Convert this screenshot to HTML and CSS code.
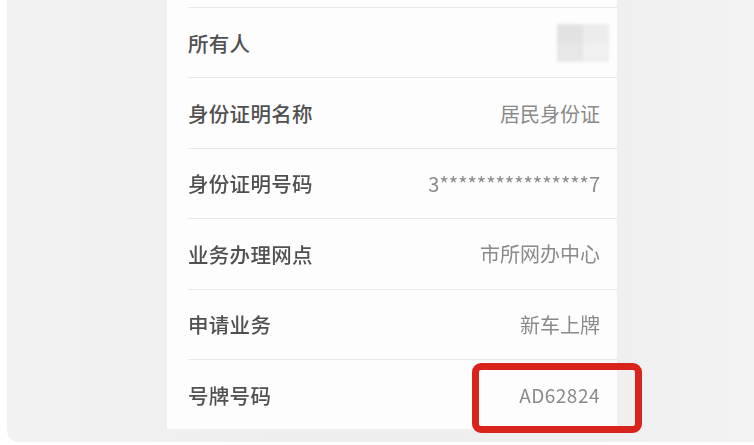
FILE: index.html
```html
<!DOCTYPE html>
<html lang="zh-CN">
<head>
<meta charset="utf-8">
<title>业务信息</title>
<link rel="stylesheet" href="styles.css">
</head>
<body>
<div class="frame">
  <div class="screen">
    <div class="card">
      <div class="row row-top"></div>
      <div class="row">
        <span class="label">所有人</span>
        <span class="mosaic"><i class="m1"></i><i class="m2"></i><i class="m3"></i><i class="m4"></i></span>
      </div>
      <div class="row">
        <span class="label">身份证明名称</span>
        <span class="value">居民身份证</span>
      </div>
      <div class="row">
        <span class="label">身份证明号码</span>
        <span class="value">3****************7</span>
      </div>
      <div class="row">
        <span class="label">业务办理网点</span>
        <span class="value">市所网办中心</span>
      </div>
      <div class="row">
        <span class="label">申请业务</span>
        <span class="value">新车上牌</span>
      </div>
      <div class="row row-last">
        <span class="label">号牌号码</span>
        <span class="value plate">AD62824</span>
        <span class="highlight"></span>
      </div>
    </div>
  </div>
</div>
</body>
</html>
```
FILE: styles.css
```css
html, body {
  margin: 0;
  padding: 0;
  width: 754px;
  height: 445px;
  overflow: hidden;
  background: #ffffff;
}

.frame {
  width: 754px;
  height: 445px;
  padding-left: 7px;
  padding-bottom: 3px;
  box-sizing: border-box;
}

.screen {
  height: 100%;
  background: linear-gradient(90deg, #f2f2f2 0%, #eeeeee 40%, #efefef 80%, #f3f3f3 100%);
  border-bottom-left-radius: 12px;
  overflow: hidden;
  padding-left: 160px;
}

.card {
  width: 450px;
  background: #fdfdfd;
  font-family: "Noto Sans CJK SC", "Noto Sans", sans-serif;
  filter: blur(0.7px);
}

.row {
  position: relative;
  height: 70.4px;
  box-sizing: border-box;
  margin-left: 21px;
  border-top: 1px solid #e9e9e9;
  display: flex;
  align-items: center;
  justify-content: space-between;
  padding-right: 17px;
}

.row-top {
  height: 7px;
  border-top: none;
}

.label {
  font-size: 20.5px;
  font-weight: 500;
  color: #505050;
  letter-spacing: 0.3px;
}

.value {
  font-size: 20px;
  color: #8a8a8a;
}

.plate {
  font-size: 19px;
  letter-spacing: 0.5px;
}

.mosaic {
  display: grid;
  grid-template-columns: 26px 26px;
  grid-template-rows: 19px 19px;
  margin-right: -9px;
  filter: blur(1.5px);
}

.mosaic i { display: block; }
.mosaic .m1 { background: #e2e2e2; }
.mosaic .m2 { background: #ececec; }
.mosaic .m3 { background: #e7e7e7; }
.mosaic .m4 { background: #f0f0f0; }

.highlight {
  position: absolute;
  top: 3px;
  right: -25px;
  width: 170px;
  height: 70px;
  box-sizing: border-box;
  border: 7px solid #d9241b;
  border-radius: 9px;
}
```
